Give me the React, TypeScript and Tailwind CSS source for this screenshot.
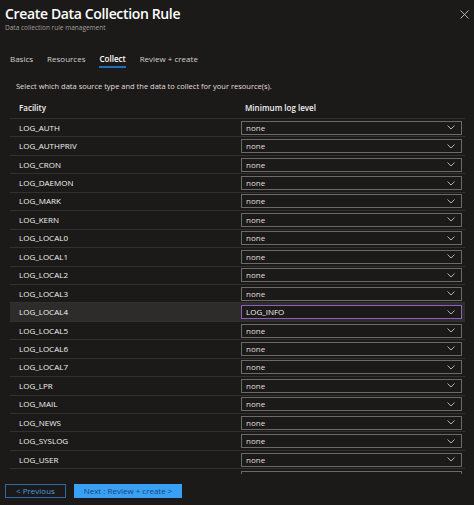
const facilities = [
  "LOG_AUTH",
  "LOG_AUTHPRIV",
  "LOG_CRON",
  "LOG_DAEMON",
  "LOG_MARK",
  "LOG_KERN",
  "LOG_LOCAL0",
  "LOG_LOCAL1",
  "LOG_LOCAL2",
  "LOG_LOCAL3",
  "LOG_LOCAL4",
  "LOG_LOCAL5",
  "LOG_LOCAL6",
  "LOG_LOCAL7",
  "LOG_LPR",
  "LOG_MAIL",
  "LOG_NEWS",
  "LOG_SYSLOG",
  "LOG_USER",
];

const Chevron = () => (
  <svg width="8" height="5" viewBox="0 0 8 5" className="text-[#c8c6c4]">
    <polyline points="0.5,0.5 4,4 7.5,0.5" fill="none" stroke="currentColor" strokeWidth="0.9" />
  </svg>
);

const Row = ({ name }: { name: string }) => {
  const active = name === "LOG_LOCAL4";
  return (
    <div
      className={`flex h-[18.45px] shrink-0 items-center border-t border-[#323130] ${
        active ? "bg-[#2d2c2b]" : ""
      }`}
    >
      <div className="w-[231px] pl-[9px] text-[8px] text-[#f3f2f1]">{name}</div>
      <div
        className={`flex h-[14px] w-[221px] items-center justify-between pl-[4px] pr-[6px] text-[8px] ${
          active
            ? "border border-[#8b5fbf] bg-[#1b1a19] text-[#f3f2f1]"
            : "border border-[#6b6a69] bg-[#1b1a19] text-[#e1dfdd]"
        }`}
      >
        <span>{active ? "LOG_INFO" : "none"}</span>
        <Chevron />
      </div>
    </div>
  );
};

export default function App() {
  return (
    <div
      className="flex h-[505px] w-[474px] flex-col overflow-hidden bg-[#1b1a19] text-[#f3f2f1]"
      style={{ fontFamily: '"Open Sans", "Noto Sans", sans-serif' }}
    >
      <div className="flex items-start justify-between pl-[5px] pr-[5px] pt-[5px]">
        <div>
          <h1 className="text-[14px] font-semibold leading-[18px] tracking-[-0.35px] text-white">
            Create Data Collection Rule
          </h1>
          <p className="text-[6.5px] leading-[9px] text-[#a19f9d]">Data collection rule management</p>
        </div>
        <svg width="9" height="9" viewBox="0 0 9 9" className="mt-[5px] text-[#c8c6c4]">
          <path d="M0.5 0.5 L8.5 8.5 M8.5 0.5 L0.5 8.5" stroke="currentColor" strokeWidth="0.9" />
        </svg>
      </div>

      <div className="mt-[21px] flex gap-[14px] pl-[10px] text-[8px] leading-[11px] text-[#d2d0ce]">
        <span className="pb-[4px]">Basics</span>
        <span className="pb-[4px]">Resources</span>
        <span className="border-b-2 border-[#1f6fb8] pb-[2px] font-semibold text-white">Collect</span>
        <span className="pb-[4px]">Review + create</span>
      </div>

      <p className="mt-[13px] pl-[16px] text-[7.5px] leading-[10px] text-[#e1dfdd]">
        Select which data source type and the data to collect for your resource(s).
      </p>

      <div className="ml-[10px] mt-[7px] flex min-h-0 w-[455px] flex-1 flex-col overflow-hidden">
        <div className="flex h-[20px] shrink-0 items-center text-[8px] font-semibold text-[#f3f2f1]">
          <div className="w-[231px] pl-[9px]">Facility</div>
          <div className="pl-[4px]">Minimum log level</div>
        </div>
        {facilities.map((f) => (
          <Row key={f} name={f} />
        ))}
        <div className="flex h-[18.45px] shrink-0 items-start border-t border-[#323130]">
          <div className="w-[231px]" />
          <div className="mt-[2px] h-[14px] w-[221px] border border-[#6b6a69]" />
        </div>
      </div>

      <div className="flex h-[31px] shrink-0 items-start gap-[8px] pl-[5px] pt-[10px] text-[8px]">
        <button className="flex h-[14px] w-[61px] items-center justify-center border border-[#2a6aa8] text-[#4a9ae0]">
          &lt; Previous
        </button>
        <button className="flex h-[14px] w-[108px] items-center justify-center bg-[#3aa0f3] text-[#17467a]">
          Next : Review + create &gt;
        </button>
      </div>
    </div>
  );
}
